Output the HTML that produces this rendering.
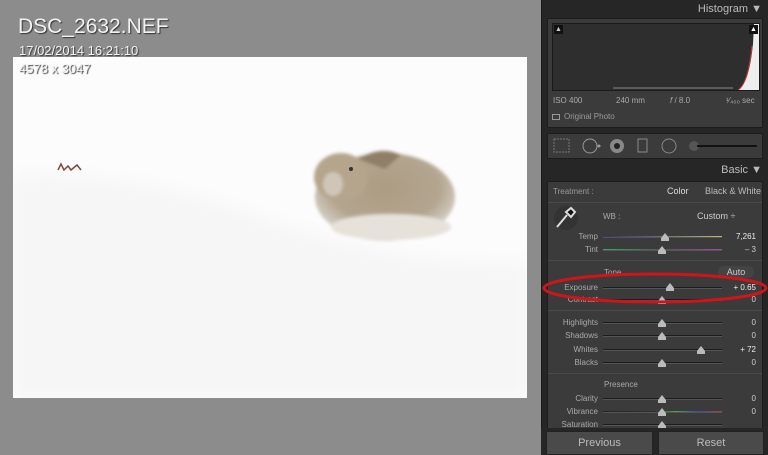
<!DOCTYPE html>
<html><head><meta charset="utf-8"><style>
*{margin:0;padding:0;box-sizing:border-box}
body{width:768px;height:455px;overflow:hidden;background:#8c8c8c;font-family:"Liberation Sans",sans-serif;position:relative}
.a{position:absolute}
.ov{color:#f2f2f2;text-shadow:1px 1px 1px #333}
.panel{position:absolute;left:541px;top:0;width:227px;height:455px;background:#262626;border-left:1px solid #1a1a1a}
.box{position:absolute;background:#3b3b3b;border:1px solid #1c1c1c}
.lbl{position:absolute;font-size:8px;color:#aaa;text-align:right;width:58px;left:540px}
.val{position:absolute;font-size:8px;color:#ccc;text-align:right;width:40px;left:716px}
.tr{position:absolute;left:603px;width:119px;height:2px;background:#1c1c1c;border-bottom:1px solid #555}
.th{position:absolute;width:0;height:0;border-left:4px solid transparent;border-right:4px solid transparent;border-bottom:5px solid #bbb}
.th:after{content:"";position:absolute;left:-4px;top:5px;width:8px;height:3px;background:#bbb}
.sep{position:absolute;left:548px;width:214px;height:1px;background:#222;border-bottom:1px solid #4a4a4a}
.hd{position:absolute;right:6px;color:#bbb;font-size:11px}
.btn{position:absolute;top:431px;height:24px;background:#4a4a4a;border:1px solid #222;color:#bbb;font-size:11px;text-align:center;line-height:22px}
</style></head><body>
<div class="a" style="left:13px;top:57px;width:514px;height:341px;background:#fcfcfc;overflow:hidden">
 <svg width="514" height="341" class="a" style="left:0;top:0">
  <defs>
   <radialGradient id="h" cx="50%" cy="40%" r="60%"><stop offset="0" stop-color="#ad9c83"/><stop offset=".65" stop-color="#b3a58f"/><stop offset="1" stop-color="#ddd8d0"/></radialGradient>
   <filter id="b"><feGaussianBlur stdDeviation="1.5"/></filter>
   <filter id="b2"><feGaussianBlur stdDeviation="8"/></filter>
  </defs>
  <path d="M0 118 Q120 112 250 160 T514 205 L514 341 L0 341Z" fill="#f6f6f6" filter="url(#b2)"/>
  <g filter="url(#b)">
  <ellipse cx="372" cy="140" rx="70" ry="44" fill="url(#h)"/>
  <ellipse cx="328" cy="120" rx="27" ry="24" fill="#b5a58c"/>
  <ellipse cx="378" cy="170" rx="60" ry="13" fill="#e6e2da"/>
  <path d="M345 102 Q368 88 388 98 L372 112Z" fill="#8f7f66"/>
  <ellipse cx="320" cy="127" rx="10" ry="12" fill="#cfc6b8"/>
  </g>
  <circle cx="338" cy="112" r="2" fill="#333"/>
  <path d="M45 113 l3 -6 l3 6 l4-4 l3 4 l6 -5 l4 5" stroke="#7a4a3a" stroke-width="1.5" fill="none"/>
 </svg>
</div>
<div class="a ov" style="left:18px;top:15px;font-size:21px">DSC_2632.NEF</div>
<div class="a ov" style="left:19px;top:43px;font-size:13px">17/02/2014 16:21:10</div>
<div class="a ov" style="left:19px;top:61px;font-size:13px">4578 x 3047</div>

<div class="panel"></div>
<div class="hd" style="top:3px">Histogram ▼</div>
<div class="box" style="left:547px;top:18px;width:216px;height:110px"></div>
<div class="a" style="left:552px;top:23px;width:208px;height:68px;background:#2e2e2e;border:1px solid #1a1a1a">
 <svg width="206" height="66"><path d="M185 66 Q196 60 200 20 L201 0 L206 0 L206 66Z" fill="#eee"/><path d="M185 66 Q195 60 199 22" stroke="#c33" fill="none"/><path d="M60 64 L180 64" stroke="#888"/></svg>
 <div class="a" style="left:1px;top:1px;width:9px;height:9px;background:#111;font-size:7px;color:#ccc;line-height:9px;text-align:center">▲</div>
 <div class="a" style="right:1px;top:1px;width:9px;height:9px;background:#111;font-size:7px;color:#fff;line-height:9px;text-align:center">▲</div>
</div>
<div class="a" style="left:553px;top:96px;font-size:8px;color:#aaa">ISO 400</div>
<div class="a" style="left:616px;top:96px;font-size:8px;color:#aaa">240 mm</div>
<div class="a" style="left:670px;top:96px;font-size:8px;color:#aaa"><i>f</i> / 8.0</div>
<div class="a" style="left:726px;top:96px;font-size:8px;color:#aaa">¹⁄₄₀₀ sec</div>
<div class="a" style="left:552px;top:114px;width:8px;height:6px;border:1px solid #999"></div>
<div class="a" style="left:564px;top:112px;font-size:8px;color:#999">Original Photo</div>

<div class="box" style="left:547px;top:133px;width:216px;height:26px"></div>
<svg class="a" style="left:550px;top:136px" width="210" height="20">
 <rect x="4" y="3" width="15" height="13" fill="none" stroke="#777" stroke-dasharray="2 1"/>
 <circle cx="40" cy="10" r="7" fill="none" stroke="#999"/><circle cx="49" cy="10" r="1.5" fill="#999"/>
 <circle cx="67" cy="10" r="7" fill="#888"/><circle cx="67" cy="10" r="3" fill="#222"/>
 <rect x="88" y="3" width="9" height="13" fill="none" stroke="#888"/>
 <circle cx="119" cy="10" r="7" fill="none" stroke="#888"/>
 <circle cx="144" cy="10" r="5" fill="#555"/><line x1="147" y1="10" x2="207" y2="10" stroke="#111" stroke-width="2"/>
</svg>
<div class="hd" style="top:164px">Basic ▼</div>
<div class="box" style="left:547px;top:181px;width:216px;height:250px"></div>
<div class="a" style="left:553px;top:187px;font-size:8px;color:#999">Treatment :</div>
<div class="a" style="left:667px;top:186px;font-size:9px;color:#ddd">Color</div>
<div class="a" style="left:705px;top:186px;font-size:9px;color:#bbb">Black &amp; White</div>
<div class="sep" style="top:202px"></div>
<svg class="a" style="left:553px;top:205px" width="26" height="26"><circle cx="13" cy="13" r="12" fill="#333"/><path d="M4 22 L14 10 M13 7 l5 -4 l4 4 l-4 5z" stroke="#ddd" stroke-width="2" fill="#111"/></svg>
<div class="a" style="left:603px;top:212px;font-size:8px;color:#aaa">WB :</div>
<div class="a" style="left:697px;top:211px;font-size:9px;color:#ccc">Custom ÷</div>
<div class="lbl" style="top:232px">Temp</div><div class="tr" style="top:236px;background:linear-gradient(90deg,#336,#558,#886,#bb6)"></div><div class="th" style="left:661px;top:233px"></div><div class="val" style="top:232px;color:#eee">7,261</div>
<div class="lbl" style="top:245px">Tint</div><div class="tr" style="top:249px;background:linear-gradient(90deg,#3a6,#555,#a4a)"></div><div class="th" style="left:658px;top:246px"></div><div class="val" style="top:245px">– 3</div>
<div class="sep" style="top:260px"></div>
<div class="a" style="left:604px;top:268px;font-size:8px;color:#aaa">Tone</div>
<div class="a" style="left:718px;top:266px;width:36px;height:12px;border-radius:6px;background:#444;font-size:9px;color:#ccc;text-align:center;line-height:12px">Auto</div>
<div class="lbl" style="top:283px">Exposure</div><div class="tr" style="top:287px"></div><div class="th" style="left:666px;top:283px"></div><div class="val" style="top:283px;color:#eee">+ 0.65</div>
<div class="lbl" style="top:295px">Contrast</div><div class="tr" style="top:299px"></div><div class="th" style="left:658px;top:296px"></div><div class="val" style="top:295px">0</div>
<div class="sep" style="top:310px"></div>
<div class="lbl" style="top:318px">Highlights</div><div class="tr" style="top:322px"></div><div class="th" style="left:658px;top:319px"></div><div class="val" style="top:318px">0</div>
<div class="lbl" style="top:331px">Shadows</div><div class="tr" style="top:335px"></div><div class="th" style="left:658px;top:332px"></div><div class="val" style="top:331px">0</div>
<div class="lbl" style="top:345px">Whites</div><div class="tr" style="top:349px"></div><div class="th" style="left:697px;top:346px"></div><div class="val" style="top:345px;color:#eee">+ 72</div>
<div class="lbl" style="top:358px">Blacks</div><div class="tr" style="top:362px"></div><div class="th" style="left:658px;top:359px"></div><div class="val" style="top:358px">0</div>
<div class="sep" style="top:373px"></div>
<div class="a" style="left:604px;top:380px;font-size:8px;color:#aaa">Presence</div>
<div class="lbl" style="top:394px">Clarity</div><div class="tr" style="top:398px"></div><div class="th" style="left:658px;top:395px"></div><div class="val" style="top:394px">0</div>
<div class="lbl" style="top:407px">Vibrance</div><div class="tr" style="top:411px;background:linear-gradient(90deg,#222 0%,#333 45%,#4a4 60%,#44a 80%,#a44 100%)"></div><div class="th" style="left:658px;top:408px"></div><div class="val" style="top:407px">0</div>
<div class="lbl" style="top:420px">Saturation</div><div class="tr" style="top:424px"></div><div class="th" style="left:658px;top:421px"></div>
<div class="a" style="left:541px;top:428px;width:227px;height:27px;background:#262626"></div>
<div class="btn" style="left:546px;width:107px">Previous</div>
<div class="btn" style="left:658px;width:106px">Reset</div>
<svg class="a" style="left:540px;top:268px" width="228" height="40"><ellipse cx="115" cy="20" rx="111" ry="14" fill="none" stroke="#d0151a" stroke-width="3"/></svg>
</body></html>
